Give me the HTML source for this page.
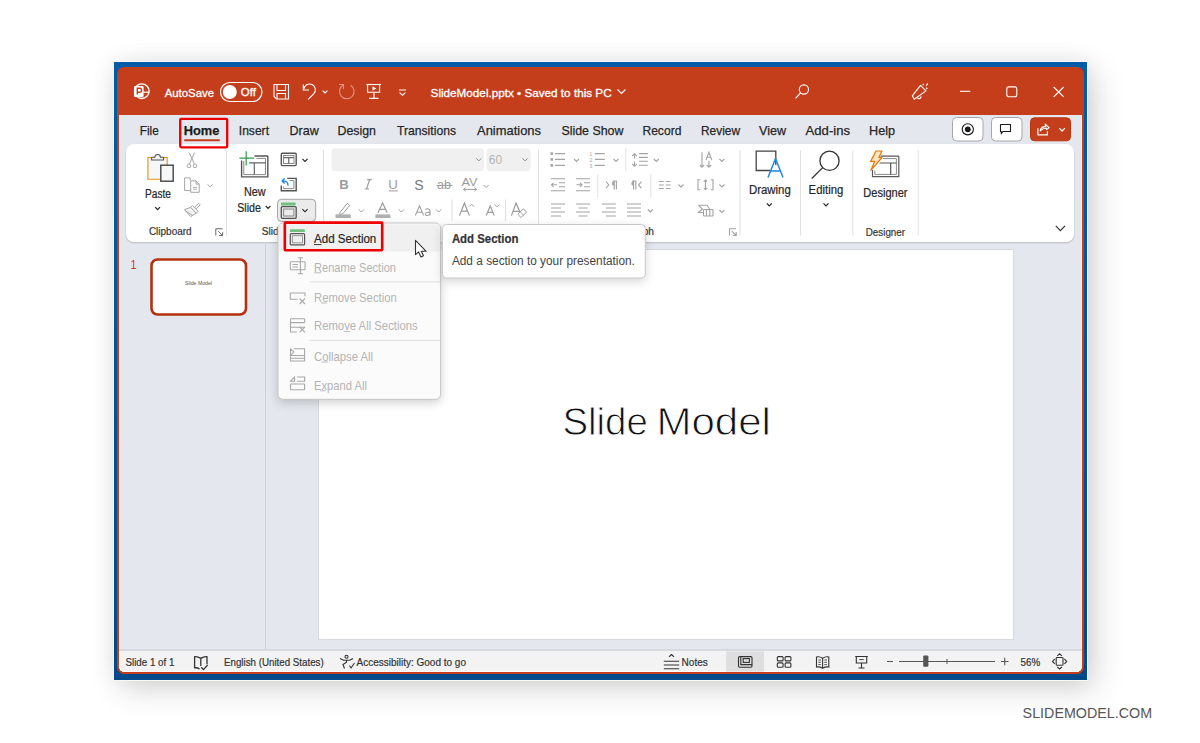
<!DOCTYPE html>
<html><head><meta charset="utf-8">
<style>
*{box-sizing:border-box;margin:0;padding:0}
html,body{width:1200px;height:743px;overflow:hidden;background:#fff;font-family:"Liberation Sans",sans-serif;position:relative}
.a{position:absolute}
.t{position:absolute;white-space:nowrap;line-height:1}
#blue{left:114px;top:62px;width:973px;height:618px;background:linear-gradient(#005ba9,#00498a);box-shadow:0 0 0 1px #fbf7f2,0 0 22px rgba(0,0,0,0.08),8px 10px 30px rgba(0,0,0,0.15)}
#win{left:117px;top:67px;width:967px;height:607px;background:#c43e1c;border-radius:7px}
#body{left:119px;top:115px;width:963px;height:557px;background:#e4e8ee;border-radius:0 0 6px 6px;overflow:hidden;box-shadow:inset 1px 0 0 #eaf6fa,inset -1px 0 0 #eaf6fa}
#ribbon{left:126px;top:144px;width:948px;height:98px;background:#fff;border-radius:8px;box-shadow:0 1px 2px rgba(0,0,0,0.2)}
#status{left:119px;top:649px;width:963px;height:23px;background:#f3f3f3;border-top:2px solid #d6d9de;border-radius:0 0 6px 6px;box-shadow:inset 1px 0 0 #fff,inset -1px 0 0 #fff,inset 0 -1px 0 #fff}
.wt{color:#fff}
.tab{font-size:12.5px;color:#262626}
.sep{position:absolute;width:1px;background:#dcdcdc}
</style></head><body>
<div id="blue" class="a"></div>
<div id="win" class="a"></div>
<div id="body" class="a"></div>
<div id="ribbon" class="a"></div>
<div id="status" class="a"></div>
<!-- pane separator & slide -->
<div class="a" style="left:265px;top:242px;width:1px;height:408px;background:#cfd3d9"></div>
<div class="a" style="left:319px;top:250px;width:694px;height:389px;background:#fff;box-shadow:0 0 0 1px #d6d9dd"></div>



<svg class="a" style="left:0;top:0" width="1200" height="743" viewBox="0 0 1200 743" font-family="Liberation Sans">
<!-- TITLE BAR -->
<g fill="none" stroke="#fff" stroke-width="1.2">
  <circle cx="141.8" cy="91.2" r="7.3" stroke-width="1.4"/>
  <line x1="143.5" y1="92.2" x2="149" y2="92.2"/>
</g>
<rect x="134" y="86" width="9.6" height="11" rx="1.3" fill="#fff"/>
<path d="M137.3 94.6 V88.3 H139.7 Q141.6 88.3 141.6 90.3 Q141.6 92.3 139.7 92.3 H137.3" fill="none" stroke="#c43e1c" stroke-width="1.4"/>
<text x="164.7" y="96.6" font-size="11.7" fill="#fff" stroke="#fff" stroke-width="0.3" textLength="49.3" lengthAdjust="spacingAndGlyphs">AutoSave</text>
<rect x="220.5" y="82.5" width="41.5" height="19" rx="9.5" fill="none" stroke="#fff" stroke-width="1.2"/>
<circle cx="229.8" cy="92" r="7" fill="#fff"/>
<text x="240.8" y="95.9" font-size="11.2" fill="#fff" stroke="#fff" stroke-width="0.3" textLength="15" lengthAdjust="spacingAndGlyphs">Off</text>
<g fill="none" stroke="#fff" stroke-width="1.1">
  <path d="M274 84.5 H288.5 V99 H276.5 L274 96.5 Z"/>
  <path d="M277 84.5 V90.5 H285.5 V84.5"/>
  <path d="M277 99 V93.5 H285.5 V99"/>
  <path d="M303.3 84.5 V90 H309"/>
  <path d="M303.8 89.2 A5.8 5.8 0 1 1 313.7 93.9 L308.2 99.4"/>
  <path d="M322.6 90.6 L325 93 L327.4 90.6"/>
</g>
<g fill="none" stroke="#fff" stroke-width="1.1" opacity="0.45">
  <path d="M350.5 85.2 A7.3 7.3 0 1 1 343.3 85.1"/>
  <path d="M339 84.5 H343.5 V89"/>
</g>
<g fill="none" stroke="#fff" stroke-width="1.1">
  <path d="M366.3 84.5 H381"/>
  <path d="M367.6 84.5 V92.3 H379.6 V84.5"/>
  <path d="M374 92.3 V98.4 M369 98.4 H378.5"/>
  <path d="M399 90 H406 M399.6 92.6 L402.5 95.2 L405.4 92.6"/>
</g>
<path d="M372.5 86.3 L376.3 88.5 L372.5 90.7 Z" fill="#fff"/>
<text x="430.6" y="96.6" font-size="11.7" fill="#fff" stroke="#fff" stroke-width="0.3" textLength="181" lengthAdjust="spacingAndGlyphs">SlideModel.pptx • Saved to this PC</text>
<g fill="none" stroke="#fff" stroke-width="1.1">
  <path d="M617.5 89.5 L621.5 93.5 L625.5 89.5"/>
  <circle cx="803.9" cy="89.5" r="4.6"/>
  <path d="M800.6 92.9 L795.6 98.4"/>
  <path d="M912.3 95.8 L920.5 85.3 L926 90.9 L914.2 99.3 Z" stroke-linejoin="round"/>
  <path d="M917.5 97.6 A1.7 1.7 0 0 0 920.8 96.2"/>
  <path d="M926.2 85.8 L927.8 83.4"/>
  <path d="M960 91.3 H970.3"/>
  <rect x="1006.8" y="86.9" width="10" height="9.8" rx="2"/>
  <path d="M1053.7 87 L1063.7 96.8 M1063.7 87 L1053.7 96.8"/>
</g>
<circle cx="923.2" cy="84.6" r="0.8" fill="#fff"/>
<circle cx="926.8" cy="88.4" r="0.8" fill="#fff"/>

<!-- MENU TABS -->
<g font-size="12.6" fill="#262626" stroke="#262626" stroke-width="0.25">
<text x="139.7" y="135.2" textLength="19" lengthAdjust="spacingAndGlyphs">File</text>
<text x="183.8" y="135.2" font-weight="bold" fill="#1a1a1a" textLength="35.6" lengthAdjust="spacingAndGlyphs">Home</text>
<text x="238.8" y="135.2" textLength="30.2" lengthAdjust="spacingAndGlyphs">Insert</text>
<text x="289.5" y="135.2" textLength="29.2" lengthAdjust="spacingAndGlyphs">Draw</text>
<text x="337.5" y="135.2" textLength="38.5" lengthAdjust="spacingAndGlyphs">Design</text>
<text x="397" y="135.2" textLength="59" lengthAdjust="spacingAndGlyphs">Transitions</text>
<text x="477" y="135.2" textLength="64" lengthAdjust="spacingAndGlyphs">Animations</text>
<text x="561.4" y="135.2" textLength="62.1" lengthAdjust="spacingAndGlyphs">Slide Show</text>
<text x="642.4" y="135.2" textLength="39" lengthAdjust="spacingAndGlyphs">Record</text>
<text x="701" y="135.2" textLength="39" lengthAdjust="spacingAndGlyphs">Review</text>
<text x="759" y="135.2" textLength="27" lengthAdjust="spacingAndGlyphs">View</text>
<text x="805.6" y="135.2" textLength="44.4" lengthAdjust="spacingAndGlyphs">Add-ins</text>
<text x="869" y="135.2" textLength="26" lengthAdjust="spacingAndGlyphs">Help</text>
</g>
<rect x="184" y="139.3" width="36" height="2" rx="1" fill="#c43e1c"/>
<rect x="180.2" y="118.8" width="47" height="28.5" rx="1" fill="none" stroke="#ee0000" stroke-width="2.3"/>
<rect x="952.5" y="117.5" width="30.5" height="23.5" rx="4" fill="#fff" stroke="#a8a8a8"/>
<rect x="991.5" y="117.5" width="30.5" height="23.5" rx="4" fill="#fff" stroke="#a8a8a8"/>
<rect x="1030.5" y="117.8" width="40" height="23" rx="4" fill="#c43e1c" stroke="#b8350f" stroke-width="1"/>
<circle cx="967.8" cy="129.3" r="5.6" fill="none" stroke="#1a1a1a" stroke-width="1.1"/>
<circle cx="967.8" cy="129.3" r="2.9" fill="#1a1a1a"/>
<path d="M1000.5 124.5 H1010.5 V131.5 H1002.8 L1001.3 133.7 V131.5 H1000.5 Z" fill="none" stroke="#1a1a1a" stroke-width="1.1" stroke-linejoin="round"/>
<g fill="none" stroke="#fff" stroke-width="1.2" stroke-linejoin="round">
  <path d="M1037.9 128.2 V134.8 H1047.4 V131.4"/>
  <path d="M1040.2 130.8 Q1040.8 126.9 1045.6 126.3 L1045.2 124.1 L1049.1 127.6 L1046.6 129.6 L1046.3 128 Q1042.6 128.3 1040.2 130.8 Z"/>
  <path d="M1059.3 128.2 L1062.1 131 L1064.9 128.2"/>
</g>

<!-- RIBBON: CLIPBOARD -->
<path d="M147.9 157.5 H167.2 V179.2 H147.9 Z" fill="#f7f7f7" stroke="#e8900e" stroke-width="1.1"/>
<path d="M151.6 160 V157.3 H154.8 A2.8 2.8 0 0 1 160.4 157.3 H163.6 V160 Z" fill="#f3f3f3" stroke="#555" stroke-width="1.1" stroke-linejoin="round"/>
<rect x="160.8" y="165.2" width="12.4" height="16" fill="#f7f7f7" stroke="#444" stroke-width="1.4"/>
<text x="145" y="197.6" font-size="12" fill="#262626" stroke="#262626" stroke-width="0.2" textLength="26" lengthAdjust="spacingAndGlyphs">Paste</text>
<path d="M155.2 207.2 L157.6 209.6 L160 207.2" fill="none" stroke="#222" stroke-width="1.2"/>
<g fill="none" stroke="#a6a6a6" stroke-width="1">
  <path d="M189.2 152.6 L194.4 164 M194.6 152.6 L189.4 164"/>
  <circle cx="188.9" cy="165.9" r="1.8"/><circle cx="195" cy="165.9" r="1.8"/>
  <path d="M190.2 190.6 H184.6 V177.9 H190.3 V180.6"/>
  <path d="M190.7 180.9 H196 L199.2 184.1 V192.3 H190.7 Z M196 180.9 V184.1 H199.2" stroke-linejoin="round"/>
  <path d="M193 187.4 H197 M193 189.2 H197" stroke-width="0.9"/>
  <path d="M207.5 184.3 L210.1 186.8 L212.7 184.3"/>
  <path d="M198.6 203.2 L200.2 204.8 L196.2 208.8 L194.6 207.2 Z"/>
  <path d="M192.4 205.6 L198.2 211.4 L196.4 213.2 L190.6 207.4 Z"/>
  <path d="M190.6 207.4 L184.4 209.6 L190.6 216.6 L196.4 213.2 Z M185.6 211 L192.6 215.4" fill="#f2f2f2" stroke-linejoin="round"/>
</g>
<text x="148.9" y="235.4" font-size="11" fill="#333" stroke="#333" stroke-width="0.2" textLength="42.8" lengthAdjust="spacingAndGlyphs">Clipboard</text>
<g fill="none" stroke="#666" stroke-width="1">
  <path d="M215.8 235.5 V228.8 H222.5"/><path d="M218.2 231.2 L222.6 235.6 M222.6 232.2 V235.6 H219.2"/>
</g>
<rect x="226" y="150" width="1" height="85.5" fill="#e1e1e1"/>
<!-- RIBBON: SLIDES -->
<g fill="none" stroke="#555" stroke-width="1.4">
  <path d="M254.5 156 H267.2 Q267.8 156 267.8 156.6 V176.9 H241.6 V160.6"/>
  <path d="M256.5 158.4 H265.5 V174.6 H243.8 V161" stroke="#8a8a8a" stroke-width="1"/>
  <path d="M249 162.9 H265.5 M254.3 162.9 V174.6" stroke="#666" stroke-width="1.2"/>
</g>
<path d="M239.4 158.1 H254 M246.2 151.3 V165.4" stroke="#2f9b4f" stroke-width="1.2"/>
<text x="244" y="196.4" font-size="12" fill="#262626" stroke="#262626" stroke-width="0.2" textLength="21.6" lengthAdjust="spacingAndGlyphs">New</text>
<text x="237.2" y="211.6" font-size="12" fill="#262626" stroke="#262626" stroke-width="0.2" textLength="23.7" lengthAdjust="spacingAndGlyphs">Slide</text>
<path d="M265.8 206 L268.1 208.4 L270.4 206" fill="none" stroke="#222" stroke-width="1.1"/>
<g fill="none" stroke="#6e6e6e" stroke-width="1.2">
  <rect x="281.3" y="153.3" width="14.9" height="12.3" rx="1" stroke="#555" stroke-width="1.4"/>
  <rect x="283.5" y="155.5" width="10.5" height="8" stroke="#8a8a8a" stroke-width="1"/>
  <path d="M283.6 157.6 H293.9 M288.75 157.6 V163.4" stroke="#666" stroke-width="1.2"/>
  <path d="M302.4 158.8 L305 161.4 L307.6 158.8" stroke="#222" stroke-width="1.1"/>
  <path d="M287.2 178.4 H296.2 V190.8 H281.3 V185.5" stroke="#555" stroke-width="1.4"/>
  <path d="M289.5 180.6 H293.9 V188.6 H283.6 V186.5" stroke="#8a8a8a" stroke-width="1"/>
</g>
<path d="M287.9 185.6 Q288.4 180.9 282.4 180.9 M284.7 178.4 L282.1 180.9 L284.7 183.4" fill="none" stroke="#1e88e5" stroke-width="1.4" stroke-linejoin="round"/>
<rect x="277.5" y="199.3" width="38.2" height="22.2" rx="4" fill="#ebebeb" stroke="#a3a3a3"/>
<rect x="281" y="202.6" width="14.6" height="2.8" rx="0.6" fill="#6fc07f"/>
<g fill="none" stroke="#555" stroke-width="1.3">
  <rect x="281.3" y="206.7" width="14.9" height="11.6" rx="1"/>
  <rect x="283.6" y="209" width="10.3" height="7" stroke="#888" stroke-width="1"/>
  <path d="M302.4 209.2 L305 211.8 L307.6 209.2" stroke="#222" stroke-width="1.1"/>
</g>
<text x="261.7" y="235.4" font-size="11" fill="#333" stroke="#333" stroke-width="0.2" textLength="27.5" lengthAdjust="spacingAndGlyphs">Slides</text>
<rect x="323" y="150" width="1" height="85.5" fill="#e1e1e1"/>

<!-- RIBBON: FONT -->
<rect x="331.5" y="148.3" width="152.5" height="23" rx="4" fill="#f0f0f0"/>
<rect x="486.5" y="148.3" width="44" height="23" rx="4" fill="#f0f0f0"/>
<g fill="none" stroke="#8a8a8a" stroke-width="1">
  <path d="M476.3 158.4 L478.8 160.9 L481.3 158.4"/>
  <path d="M522.5 158.4 L525 160.9 L527.5 158.4"/>
</g>
<text x="488.8" y="164.3" font-size="12" fill="#b3b3b3">60</text>
<g fill="#9c9c9c" font-size="13.2">
  <text x="339.3" y="189.2" font-weight="bold">B</text>
  
  <text x="388.3" y="189.2">U</text>
  <text x="414.2" y="189.8" fill="#777" font-size="14">S</text>
  <text x="437" y="189.2" font-size="12.5">ab</text>
  <text x="461.5" y="186" font-size="11.5" textLength="16" lengthAdjust="spacingAndGlyphs">AV</text>
  
</g>
<g fill="none" stroke="#9c9c9c" stroke-width="1">
  <path d="M388.8 190.9 H397.8"/>
  <path d="M369.6 179.6 L366.6 189 M367.2 179.6 H371.8 M364.6 189 H369" stroke-width="1.2"/>
  <path d="M436.5 185.4 H452.3"/>
  <path d="M463.5 189.4 H476.5 M465.5 187.6 L463.5 189.4 L465.5 191.2 M474.5 187.6 L476.5 189.4 L474.5 191.2"/>
  <path d="M483.6 185 L486.1 187.5 L488.6 185"/>
  <path d="M358.8 209.5 L361.3 212 L363.8 209.5"/>
  <path d="M398.8 209.5 L401.3 212 L403.8 209.5"/>
  <path d="M436.2 209.5 L438.7 212 L441.2 209.5"/>
  <path d="M469.2 206.6 L471.6 204.2 L474 206.6"/>
  <path d="M494.5 204.3 L497 206.8 L499.5 204.3"/>
  <path d="M459.4 215.6 L464.4 203.2 L469.4 215.6 M461.2 211.2 H467.6" stroke-width="1.2"/>
  <path d="M486.2 215.6 L490.2 206 L494.2 215.6 M487.6 212.4 H492.8" stroke-width="1.2"/>
  <path d="M378 212.8 L382.6 203 L387.2 212.8 M379.6 209.4 H385.6" stroke-width="1.2"/>
  <path d="M415.4 215.4 L419.5 205.8 L423.6 215.4 M416.8 212.2 H422.2" stroke-width="1.1"/>
  <path d="M425.2 209.6 Q426.6 208.6 428 208.8 Q430 209.2 430 211 V215.4 M430 212.4 Q426 211.8 425.3 213.6 Q425.2 215.6 427.4 215.5 Q429.4 215.2 430 213.8" stroke-width="1.1"/>
  <path d="M340 212.5 L347.3 203.3 L349.7 205.4 L342.4 214.2 L339.5 214.3 Z" stroke-linejoin="round"/>
  <path d="M511.4 215.6 L516 203.2 L520.2 212.6 M512.8 211.4 H519" stroke-width="1.2"/>
  <path d="M517.8 214.2 L523.4 208.8 L526.6 212 L521 217.6 Z M520.2 211.8 L523.6 215.2" fill="#fff"/>
</g>
<rect x="335.5" y="214.4" width="15.3" height="3.6" fill="#b0b0b0"/>
<rect x="375.4" y="214.4" width="15" height="3.6" fill="#b0b0b0"/>
<rect x="451.5" y="199.5" width="1" height="21.5" fill="#e1e1e1"/>
<rect x="505" y="199.5" width="1" height="21.5" fill="#e1e1e1"/>
<rect x="538" y="150" width="1" height="85.5" fill="#e1e1e1"/>
<!-- RIBBON: PARAGRAPH -->
<g fill="#a3a3a3">
  <rect x="550.5" y="152.3" width="2.6" height="2.6"/><rect x="550.5" y="158.1" width="2.6" height="2.6"/><rect x="550.5" y="164.1" width="2.6" height="2.6"/>
</g>
<g font-size="5" fill="#a3a3a3"><text x="589.6" y="156">1</text><text x="589.6" y="162">2</text><text x="589.6" y="167.5">3</text></g>
<g fill="none" stroke="#a3a3a3" stroke-width="1.1">
  <path d="M555 153.6 H565 M555 159.4 H565 M555 165.4 H565"/>
  <path d="M594.8 153.6 H604.8 M594.8 159.4 H604.8 M594.8 165.4 H604.8"/>
  <path d="M574 159 L576.5 161.5 L579 159"/>
  <path d="M613.5 159 L616 161.5 L618.5 159"/>
  <path d="M653.8 159 L656.3 161.5 L658.8 159"/>
  <path d="M634.5 153.8 V158.6 M632.2 156 L634.5 153.7 L636.8 156 M634.5 161.4 V166.2 M632.2 164 L634.5 166.3 L636.8 164"/>
  <path d="M639 153.6 H647.8 M639 157.4 H647.8 M639 161.3 H647.8 M639 165.2 H647.8"/>
  <path d="M551 178.8 H565 M559 182.8 H565 M559 186.8 H565 M551 190.8 H565 M557 184.8 H551.5 M553.5 182.8 L551.5 184.8 L553.5 186.8"/>
  <path d="M576 178.8 H590 M584 182.8 H590 M584 186.8 H590 M576 190.8 H590 M576.5 184.8 H582 M580 182.8 L582 184.8 L580 186.8"/>
  <path d="M606 181.6 L608.8 184.9 L606 188.2"/>
  <path d="M641.4 181.6 L638.6 184.9 L641.4 188.2"/>
  <path d="M614.2 181 V189.4 M616.4 181 V189.4 M612.6 181 H617"/>
  <path d="M633.6 181 V189.4 M635.8 181 V189.4 M632 181 H636.4"/>
  <path d="M551 204 H565 M551 208 H561 M551 212 H565 M551 216 H561"/>
  <path d="M576 204 H590 M578.5 208 H587.5 M576 212 H590 M578.5 216 H587.5"/>
  <path d="M601.8 204 H615.8 M605.8 208 H615.8 M601.8 212 H615.8 M605.8 216 H615.8"/>
  <path d="M627 204 H641 M627 208 H641 M627 212 H641 M627 216 H641"/>
  <path d="M647.8 209.5 L650.3 212 L652.8 209.5"/>
  <path d="M659 181.5 H663.8 M659 185 H663.8 M659 188.5 H663.8 M665.8 181.5 H670.6 M665.8 185 H670.6 M665.8 188.5 H670.6"/>
  <path d="M678.5 184.5 L681 187 L683.5 184.5"/>
  <path d="M702 152.3 V167.2 M699.8 165 L702 167.2 L704.2 165"/>
  <path d="M706 160 L708.9 152.3 L711.8 160 M707 157.3 H710.8"/>
  <path d="M708.9 160.8 V167.2 M706.7 165 L708.9 167.2 L711.1 165"/>
  <path d="M719.4 159 L721.9 161.5 L724.4 159"/>
  <path d="M700.2 179.8 H698 V189.8 H700.2 M710.8 179.8 H713 V189.8 H710.8"/>
  <path d="M705.5 180 V189.6 M703.8 181.7 L705.5 180 L707.2 181.7 M703.8 187.9 L705.5 189.6 L707.2 187.9"/>
  <path d="M719.4 184.5 L721.9 187 L724.4 184.5"/>
  <path d="M698.5 205.3 H707 L710 209.5 M698.5 205.3 L702.5 209 L698.5 212.5 H703.5"/>
  <rect x="703.5" y="209.5" width="9.5" height="6.5" rx="0.8"/>
  <path d="M706.5 209.5 V216 M709.8 209.5 V216"/>
  <path d="M719.4 210 L721.9 212.5 L724.4 210"/>
  <path d="M729.5 235.3 V228.8 H736 M731.8 231.1 L736.2 235.5 M736.2 232.1 V235.5 H732.8"/>
</g>
<path d="M614.2 181.2 A2.3 2.3 0 0 0 614.2 185.8 Z M633.6 181.2 A2.3 2.3 0 0 0 633.6 185.8 Z" fill="#a3a3a3"/>
<rect x="625.3" y="148" width="1" height="23" fill="#e1e1e1"/>
<rect x="597.3" y="174" width="1" height="23" fill="#e1e1e1"/>
<rect x="650.3" y="174" width="1" height="23" fill="#e1e1e1"/>
<text x="606.5" y="235.4" font-size="11" fill="#333" stroke="#333" stroke-width="0.2" textLength="47.5" lengthAdjust="spacingAndGlyphs">Paragraph</text>
<rect x="739.5" y="150" width="1" height="85.5" fill="#e1e1e1"/>
<!-- DRAWING / EDITING / DESIGNER -->
<path d="M775.8 165 V151.2 H756.2 V170.5 H770" fill="none" stroke="#444" stroke-width="1.3"/>
<path d="M768 177.5 L775.5 158.5 L783 177.5 M770.8 171 H780.2" fill="none" stroke="#1e88e5" stroke-width="1.5"/>
<text x="749" y="194.2" font-size="12" fill="#262626" stroke="#262626" stroke-width="0.2" textLength="41.8" lengthAdjust="spacingAndGlyphs">Drawing</text>
<path d="M766.8 203.4 L769.3 205.9 L771.8 203.4" fill="none" stroke="#222" stroke-width="1.2"/>
<rect x="800" y="150" width="1" height="85.5" fill="#e1e1e1"/>
<circle cx="829.5" cy="160.8" r="9.6" fill="none" stroke="#333" stroke-width="1.3"/>
<path d="M822.7 167.6 L811.8 178.5" stroke="#333" stroke-width="1.3"/>
<text x="808.6" y="194.2" font-size="12" fill="#262626" stroke="#262626" stroke-width="0.2" textLength="34.7" lengthAdjust="spacingAndGlyphs">Editing</text>
<path d="M823.5 203.4 L826 205.9 L828.5 203.4" fill="none" stroke="#222" stroke-width="1.2"/>
<rect x="852.3" y="150" width="1" height="85.5" fill="#e1e1e1"/>
<g fill="none" stroke="#595959" stroke-width="1.2">
  <path d="M880.5 156.2 H898.4 Q898.8 156.2 898.8 156.8 V176.6 H872.5 V170"/>
  <path d="M883 158.6 H896.4 V174.4 H874.8 V170.5" stroke="#8a8a8a" stroke-width="1"/>
  <path d="M879.5 163 H896.4 M890.7 163 V174.4" stroke="#555" stroke-width="1.2"/>
</g>
<path d="M876 151 H882 L878.8 157.5 H882 L870.8 170.4 L874.6 161.4 H870.6 Z" fill="#fce6bf" stroke="#e8760a" stroke-width="1.2" stroke-linejoin="round"/>
<text x="863.3" y="196.8" font-size="12" fill="#262626" stroke="#262626" stroke-width="0.2" textLength="44.2" lengthAdjust="spacingAndGlyphs">Designer</text>
<text x="865.8" y="235.6" font-size="11" fill="#333" stroke="#333" stroke-width="0.2" textLength="39.2" lengthAdjust="spacingAndGlyphs">Designer</text>
<rect x="917.7" y="150" width="1" height="85.5" fill="#e1e1e1"/>
<path d="M1055.8 225.8 L1060.4 230.6 L1065 225.8" fill="none" stroke="#333" stroke-width="1.2"/>

<g font-size="39.5" fill="#111" stroke="#fff" stroke-width="0.9">
<text x="562.4" y="435.1" textLength="85.5" lengthAdjust="spacingAndGlyphs">Slide</text>
<text x="656.4" y="435.1" textLength="114.5" lengthAdjust="spacingAndGlyphs">Model</text>
</g>
<text x="1022.6" y="718.2" font-size="14.6" fill="#555" textLength="129.5" lengthAdjust="spacingAndGlyphs">SLIDEMODEL.COM</text>
<!-- THUMBNAIL PANE -->
<text x="130.5" y="269.3" font-size="12.5" fill="#c43e1c" textLength="6" lengthAdjust="spacingAndGlyphs">1</text>
<rect x="151.5" y="259.5" width="94.5" height="55" rx="6" fill="#fff" stroke="#b5300f" stroke-width="2.6"/>
<text x="185" y="285" font-size="4.6" fill="#555" textLength="27" lengthAdjust="spacingAndGlyphs">Slide Model</text>
<!-- DROPDOWN -->
<rect x="278" y="223" width="162.6" height="176.3" rx="5" fill="#fbfbfb" stroke="#c6c6c6" style="filter:drop-shadow(0 3px 5px rgba(0,0,0,0.18))"/>
<rect x="279" y="224.5" width="160.6" height="27" fill="#f0f0f0"/>
<rect x="284.8" y="222.6" width="97.4" height="27.6" rx="0.8" fill="none" stroke="#ee0000" stroke-width="2.6"/>
<rect x="289.9" y="229.2" width="15" height="2.9" rx="0.7" fill="#6fc07f"/>
<g fill="none" stroke="#555" stroke-width="1.2">
  <rect x="290.3" y="233.6" width="14.3" height="11.3" rx="1"/>
  <rect x="292.4" y="235.7" width="10.1" height="7.1" stroke="#999" stroke-width="1"/>
</g>
<text x="314" y="242.6" font-size="12.4" fill="#262626" stroke="#262626" stroke-width="0.2" textLength="62.3" lengthAdjust="spacingAndGlyphs">Add Section</text>
<path d="M314 244.6 H321.5" stroke="#262626" stroke-width="0.9"/>
<g font-size="12.4" fill="#b4b4b4">
<text x="314" y="271.5" textLength="82" lengthAdjust="spacingAndGlyphs">Rename Section</text>
<text x="314" y="301.7" textLength="82.7" lengthAdjust="spacingAndGlyphs">Remove Section</text>
<text x="314" y="330.1" textLength="103.7" lengthAdjust="spacingAndGlyphs">Remove All Sections</text>
<text x="314" y="360.6" textLength="59" lengthAdjust="spacingAndGlyphs">Collapse All</text>
<text x="314" y="389.5" textLength="53" lengthAdjust="spacingAndGlyphs">Expand All</text>
</g>
<path d="M309.5 281.9 H440 M309.5 340.4 H440" stroke="#dedede" stroke-width="1"/>
<g fill="none" stroke="#a8a8a8" stroke-width="1.1">
  <rect x="290.3" y="261.8" width="14.8" height="8" rx="0.8"/>
  <path d="M292.5 264.5 H298 M292.5 267 H298"/>
  <path d="M300.4 258 V273.6 M297.8 257.8 H303 M297.8 273.8 H303"/>
  <path d="M290.3 293 H305 V296.2 M290.3 293 V299.3 H297.5"/>
  <path d="M299.5 298.5 L305 304 M305 298.5 L299.5 304"/>
  <rect x="290.5" y="318.8" width="14.2" height="3.8" rx="0.6"/>
  <path d="M290.5 322.6 V332 H297 M290.5 327.3 H304.7"/>
  <path d="M299.5 326.8 L305 332.3 M305 326.8 L299.5 332.3"/>
  <path d="M294 348.8 H304.6 V361 H290.5 V355.5 H304.6 M290.5 348.8 L294 352 L290.5 355.3 Z M290.5 358.2 H304.6"/>
  <path d="M294.5 377 V381.2 H290.5 Z M297 377 H304.6 V381.2 H297"/>
  <rect x="290.5" y="384" width="14.1" height="5.8" rx="0.6"/>
</g>
<path d="M314.2 272.8 H321 M321.2 303 H326.8 M343.6 331.4 H350.2 M321.4 362 H328 M320.2 390.8 H325.6" stroke="#b4b4b4" stroke-width="0.9"/>
<!-- TOOLTIP -->
<rect x="442.5" y="224.5" width="202.8" height="53.5" rx="4" fill="#fff" stroke="#c9c9c9" style="filter:drop-shadow(0 3px 5px rgba(0,0,0,0.16))"/>
<text x="451.9" y="242.8" font-size="12" font-weight="bold" fill="#333" stroke="#333" stroke-width="0.2" textLength="66.5" lengthAdjust="spacingAndGlyphs">Add Section</text>
<text x="451.9" y="265.3" font-size="12" fill="#444" textLength="183" lengthAdjust="spacingAndGlyphs">Add a section to your presentation.</text>
<!-- CURSOR -->
<path d="M415.5 240.4 V254.6 L418.6 251.9 L420.9 256.9 L423.5 255.7 L421.3 251.3 H426.2 Z" fill="#fff" stroke="#333" stroke-width="1.1" stroke-linejoin="round"/>

<!-- STATUS BAR -->
<g font-size="10.3" fill="#333" stroke="#333" stroke-width="0.2">
<text x="125.5" y="665.8" textLength="48.9" lengthAdjust="spacingAndGlyphs">Slide 1 of 1</text>
<text x="224" y="665.8" textLength="99.7" lengthAdjust="spacingAndGlyphs">English (United States)</text>
<text x="356.5" y="665.8" textLength="109.5" lengthAdjust="spacingAndGlyphs">Accessibility: Good to go</text>
<text x="681.6" y="665.8" textLength="26.2" lengthAdjust="spacingAndGlyphs">Notes</text>
<text x="1020.6" y="665.8" textLength="19.6" lengthAdjust="spacingAndGlyphs">56%</text>
</g>
<g fill="none" stroke="#333" stroke-width="1.1" stroke-linejoin="round">
  <path d="M200.8 658.4 Q197.8 656.3 194.6 656.6 V667.8 Q197.6 667.6 199.6 669" stroke-width="1.3"/>
  <path d="M200.8 658.4 Q203.8 656.3 207 656.6 V664.2 M200.8 658.4 V666" stroke-width="1.3"/>
  <path d="M201.2 667.2 L203.4 669.6 L207.6 665" stroke-width="1.3"/>
  <circle cx="346.5" cy="656.8" r="1.5"/>
  <path d="M340 658.5 L343.5 660.2 H349.5 L353 658.5 M346.5 660.2 V662.3 L343 664.5 L344.5 668.5 M349.5 665.5 L351 668 L354.5 663"/>
  <path d="M669 656.8 L671.5 654.5 L674 656.8"/>
  <path d="M663.8 661.2 H679.2 M663.8 665 H679.2 M663.8 668.8 H679.2"/>
</g>
<rect x="726.2" y="651.5" width="37.8" height="20.1" fill="#dedede"/>
<g fill="none" stroke="#333" stroke-width="1.1">
  <rect x="738.5" y="656.6" width="13.5" height="10.6" rx="1.2"/>
  <path d="M740.8 656.6 V664.6 H752"/>
  <rect x="743.2" y="658.6" width="6.2" height="3.8"/>
  <rect x="777.3" y="656.6" width="5.8" height="4.3" rx="1"/><rect x="785.1" y="656.6" width="5.8" height="4.3" rx="1"/>
  <rect x="777.3" y="662.9" width="5.8" height="4.3" rx="1"/><rect x="785.1" y="662.9" width="5.8" height="4.3" rx="1"/>
  <path d="M822.6 658.2 Q819.5 656.2 816.5 657 V667 Q819.5 666.4 822.6 668.2 Q825.8 666.4 828.8 667 V657 Q825.8 656.2 822.6 658.2 V668.2"/>
  <path d="M818.3 660 H821 M818.3 662.3 H821 M818.3 664.6 H821 M824.3 660 H827 M824.3 662.3 H827 M824.3 664.6 H827" stroke-width="0.8"/>
  <path d="M855.2 656.5 H867.8 M856.3 656.5 V663 H866.7 V656.5 M861.5 663 V668 M858.5 668 H864.5"/>
  <path d="M859.3 659.6 H863.7" stroke-width="0.9"/>
</g>
<path d="M887 661.5 H893 M899 661.5 H995 M1001 661.5 H1008.5 M1004.7 657.7 V665.3" stroke="#555" stroke-width="1.1"/>
<path d="M947 659 V664" stroke="#555" stroke-width="1"/>
<rect x="923.2" y="655.5" width="5.2" height="11.2" rx="1" fill="#555"/>
<g fill="none" stroke="#333" stroke-width="1.1">
  <rect x="1056.2" y="657.5" width="6.8" height="7.8" rx="0.8"/>
  <path d="M1057.3 655.8 L1059.6 653.8 L1061.9 655.8 M1057.3 667 L1059.6 669 L1061.9 667 M1054.8 659 L1052.5 661.4 L1054.8 663.8 M1064.4 659 L1066.7 661.4 L1064.4 663.8"/>
</g>
</svg>
</body></html>
